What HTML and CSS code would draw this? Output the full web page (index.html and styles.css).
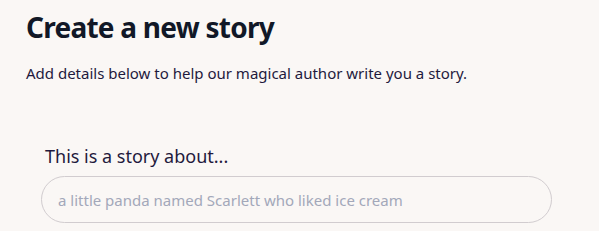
FILE: index.html
```html
<!DOCTYPE html>
<html lang="en">
<head>
  <meta charset="UTF-8">
  <meta name="viewport" content="width=device-width, initial-scale=1.0">
  <title>Create a new story</title>
  <link rel="stylesheet" href="styles.css">
</head>
<body>
  <div class="page">
    <h1>Create a new story</h1>
    <p class="intro">Add details below to help our magical author write you a story.</p>
    <form class="story-form">
      <label for="about">This is a story about...</label>
      <input type="text" id="about" placeholder="a little panda named Scarlett who liked ice cream">
    </form>
  </div>
</body>
</html>
```

FILE: styles.css
```css
body {
  font-family: "Noto Sans", "Open Sans", sans-serif;
  background-color: #faf7f5;
  margin: 0;
  padding: 0;
}

.page {
  padding: 7px 47px 0 26px;
}

h1 {
  font-size: 28px;
  font-weight: 700;
  letter-spacing: -0.75px;
  color: #111827;
  margin: 0;
  line-height: 40px;
}

.intro {
  font-size: 15px;
  color: #1f1a3d;
  margin: 16px 0 0;
  line-height: 20px;
}

.story-form {
  display: flex;
  flex-direction: column;
  margin-top: 61px;
  padding-left: 15px;
}

label {
  font-size: 18px;
  color: #1f1a3d;
  padding-left: 4px;
  line-height: 24px;
}

input {
  margin-top: 8px;
  height: 47px;
  box-sizing: border-box;
  border: 1px solid #d1cccf;
  border-radius: 24px;
  background: transparent;
  padding: 0 16px;
  font-family: inherit;
  font-size: 15px;
  color: #1f1a3d;
  outline: none;
}

input::placeholder {
  color: #a3a8ba;
}
```
